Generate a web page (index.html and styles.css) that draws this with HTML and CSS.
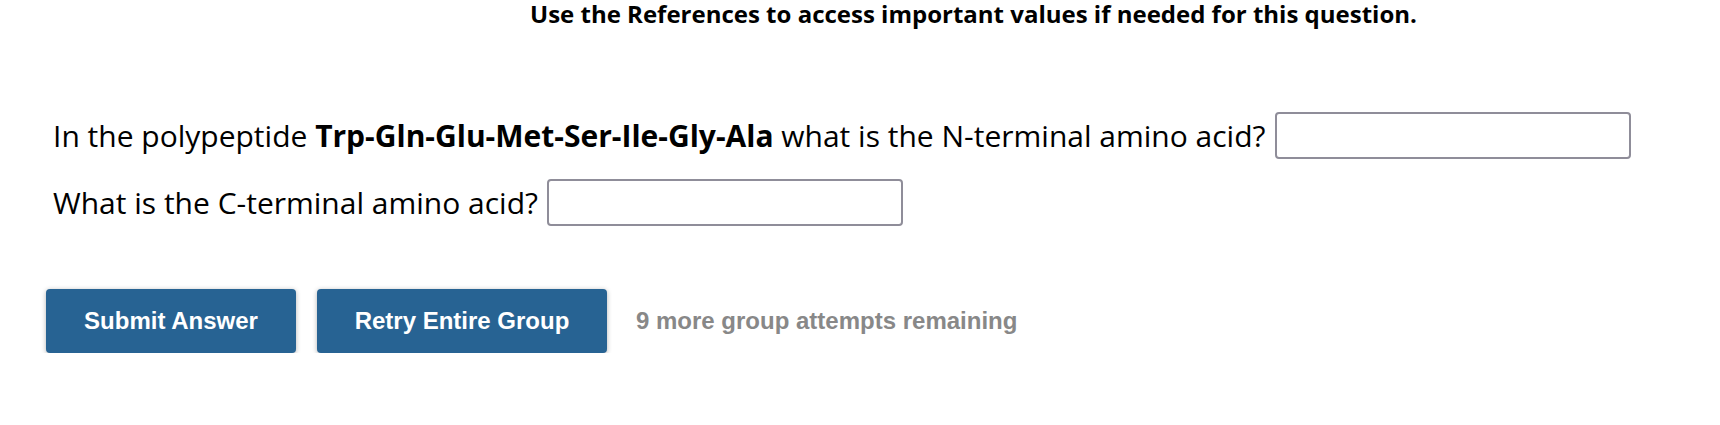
FILE: index.html
```html
<!DOCTYPE html>
<html lang="en">
<head>
  <meta charset="UTF-8"/>
  <title>Question</title>
  <link rel="stylesheet" href="styles.css">
</head>
<body>
  <div class="refs-note">Use the References to access important values if needed for this question.</div>

  <div class="question">
    <div class="q-row">
      <span>In the polypeptide <b>Trp-Gln-Glu-Met-Ser-Ile-Gly-Ala</b> what is the N-terminal amino acid?</span>
      <input type="text" class="answer-box">
    </div>
    <div class="q-row">
      <span>What is the C-terminal amino acid?</span>
      <input type="text" class="answer-box">
    </div>
  </div>

  <div class="actions">
    <button class="btn btn-submit">Submit Answer</button>
    <button class="btn btn-retry">Retry Entire Group</button>
    <span class="attempts">9 more group attempts remaining</span>
  </div>
</body>
</html>
```

FILE: styles.css
```css
* { box-sizing: border-box; }
body {
  margin: 0;
  background: #fff;
  color: #000;
  font-family: 'Open Sans', sans-serif;
}

.refs-note {
  padding: 2px 0 0 530px;
  font-size: 24px;
  font-weight: 700;
  line-height: 24px;
}

.question {
  padding: 86px 0 0 53px;
  font-size: 30px;
}
.q-row {
  display: flex;
  align-items: center;
  gap: 9px;
  margin-bottom: 20px;
}
.answer-box {
  width: 356px;
  height: 47px;
  border: 2px solid #8f8d99;
  border-radius: 4px;
  background: #fff;
  font-size: 20px;
}

.actions {
  display: flex;
  align-items: center;
  padding: 43px 0 0 46px;
  font-family: 'Liberation Sans', Arial, sans-serif;
  font-weight: 700;
  font-size: 24px;
}
.btn {
  height: 64px;
  border: none;
  border-radius: 4px;
  background: #276393;
  color: #fff;
  font: inherit;
  box-shadow: 0 1px 5px rgba(0,0,0,0.3);
  cursor: pointer;
}
.btn-submit { width: 250px; margin-right: 21px; }
.btn-retry { width: 290px; margin-right: 29px; }
.attempts { color: #888; }
```
